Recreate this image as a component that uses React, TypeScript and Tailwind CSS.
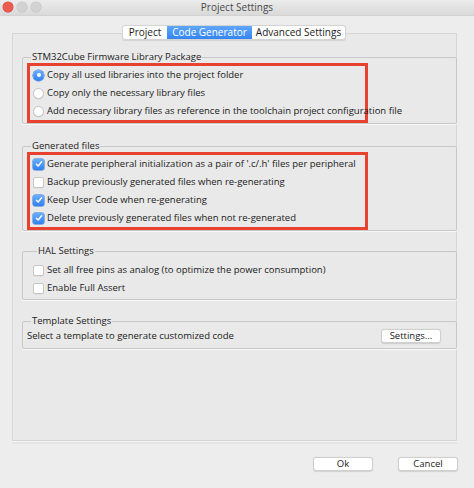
import React from "react";

const font = "font-['Open_Sans','Noto_Sans',sans-serif]";

function Radio({ checked }: { checked?: boolean }) {
  return checked ? (
    <span className="flex h-[11px] w-[11px] shrink-0 items-center justify-center rounded-full bg-gradient-to-b from-[#69aefc] to-[#2f7ff0] shadow-[0_0_0_0.5px_#2d74d8]">
      <span className="h-[4px] w-[4px] rounded-full bg-white" />
    </span>
  ) : (
    <span className="h-[11px] w-[11px] shrink-0 rounded-full border border-[#c4c4c4] bg-white shadow-[0_0.5px_0.5px_rgba(0,0,0,0.08)]" />
  );
}

function Check({ checked }: { checked?: boolean }) {
  return checked ? (
    <span className="flex h-[11px] w-[11px] shrink-0 items-center justify-center rounded-[2px] bg-gradient-to-b from-[#69aefc] to-[#2f7ff0] shadow-[0_0_0_0.5px_#2d74d8]">
      <svg width="8" height="8" viewBox="0 0 8 8">
        <path d="M1.4 4.2 L3.2 6 L6.6 1.8" fill="none" stroke="white" strokeWidth="1.4" strokeLinecap="round" strokeLinejoin="round" />
      </svg>
    </span>
  ) : (
    <span className="h-[11px] w-[11px] shrink-0 rounded-[2px] border border-[#c6c6c6] bg-white shadow-[0_0.5px_0.5px_rgba(0,0,0,0.08)]" />
  );
}

function Row({ children, control }: { children: React.ReactNode; control: React.ReactNode }) {
  return (
    <div className="flex h-[18px] items-center gap-[3px] whitespace-nowrap">
      {control}
      <span>{children}</span>
    </div>
  );
}

function Group({ title, children, className }: { title: string; children: React.ReactNode; className?: string }) {
  return (
    <fieldset className={"w-[435px] border border-[#c8c8c8] rounded-[2px] shadow-[0_1px_0_#f8f8f8] " + (className ?? "")}>
      <legend className="ml-[4px] px-[1px] leading-[12px] text-[#222]">{title}</legend>
      {children}
    </fieldset>
  );
}

function Btn({ children, className }: { children: React.ReactNode; className?: string }) {
  return (
    <div className={"flex h-[14px] items-center justify-center rounded-[3px] border border-[#cfcfcf] bg-white text-[#222] shadow-[0_0.5px_1px_rgba(0,0,0,0.12)] " + (className ?? "")}>
      {children}
    </div>
  );
}

export default function App() {
  return (
    <div className={"relative h-[488px] w-[474px] overflow-hidden bg-[#ededed] text-[9.5px] text-[#1a1a1a] " + font}>
      {/* title bar */}
      <div className="relative flex h-[16px] items-center justify-center border-b border-[#d2d2d2] bg-gradient-to-b from-[#ececec] to-[#d9d9d9]">
        <div className="absolute left-[3px] top-[2px] flex gap-[4px]">
          <span className="h-[10px] w-[10px] rounded-full bg-[#ec5b4f] shadow-[0_0_0_0.5px_#d14a40]" />
          <span className="h-[10px] w-[10px] rounded-full bg-[#d2d2d2] shadow-[0_0_0_0.5px_#c2c2c2]" />
          <span className="h-[10px] w-[10px] rounded-full bg-[#d2d2d2] shadow-[0_0_0_0.5px_#c2c2c2]" />
        </div>
        <span className="text-[10px] text-[#4a4a4a]">Project Settings</span>
      </div>

      {/* tabs */}
      <div className="relative z-10 mt-[9px] flex justify-center pr-[6px]">
        <div className="flex h-[15px] rounded-[3px] border border-[#d4d4d4] bg-white text-[10px] shadow-[0_0.5px_1px_rgba(0,0,0,0.1)]">
          <div className="flex w-[44px] items-center justify-center text-[#1a1a1a]">Project</div>
          <div className="flex w-[85px] items-center justify-center bg-gradient-to-b from-[#5ea6fb] to-[#3485f2] text-white">Code Generator</div>
          <div className="flex w-[93px] items-center justify-center text-[#1a1a1a]">Advanced Settings</div>
        </div>
      </div>

      {/* panel */}
      <div className="-mt-[7px] ml-[12px] h-[408px] w-[445px] border border-[#d6d6d6] bg-[#e9e9e9] pl-[9px] pt-[17px] shadow-[0_1px_0_#f6f6f6,0_3px_0_#e4e4e4]">
        <Group title="STM32Cube Firmware Library Package" className="px-[4px]">
          <div className="w-[341px] border-[3px] border-[#e8412f] pl-[3px]">
            <Row control={<Radio checked />}>Copy all used libraries into the project folder</Row>
            <Row control={<Radio />}>Copy only the necessary library files</Row>
            <Row control={<Radio />}>Add necessary library files as reference in the toolchain project configuration file</Row>
          </div>
        </Group>

        <Group title="Generated files" className="mt-[16px] px-[4px]">
          <div className="w-[341px] border-[3px] border-[#e8412f] pl-[3px]">
            <Row control={<Check checked />}>Generate peripheral initialization as a pair of '.c/.h' files per peripheral</Row>
            <Row control={<Check />}>Backup previously generated files when re-generating</Row>
            <Row control={<Check checked />}>Keep User Code when re-generating</Row>
            <Row control={<Check checked />}>Delete previously generated files when not re-generated</Row>
          </div>
        </Group>

        <Group title="HAL Settings" className="mt-[14px] pb-[2px] pl-[10px] pt-[4px]">
          <Row control={<Check />}>Set all free pins as analog (to optimize the power consumption)</Row>
          <Row control={<Check />}>Enable Full Assert</Row>
        </Group>

        <Group title="Template Settings" className="mt-[15px] pb-[3px] pl-[4px] pr-[15px]">
          <div className="flex h-[18px] items-center justify-between">
            <span>Select a template to generate customized code</span>
            <Btn className="w-[60px]">Settings...</Btn>
          </div>
        </Group>
      </div>

      {/* bottom buttons */}
      <div className="mt-[16px] flex justify-end gap-[25px] pr-[16px]">
        <Btn className="w-[60px]">Ok</Btn>
        <Btn className="w-[60px]">Cancel</Btn>
      </div>
    </div>
  );
}
